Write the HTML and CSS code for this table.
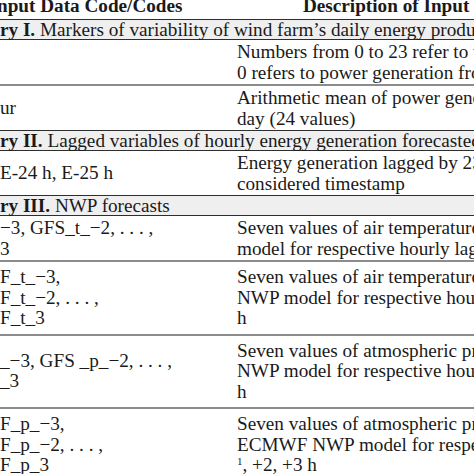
FILE: index.html
```html
<!DOCTYPE html>
<html>
<head>
<meta charset="utf-8">
<link rel="stylesheet" href="styles.css">
</head>
<body>
<div class="table">
  <div class="head">
    <div class="c1">nput Data Code/Codes</div>
    <div class="c2">Description of Input Data</div>
  </div>
  <div class="cat"><b>ry I.</b> Markers of variability of wind farm’s daily energy production</div>
  <div class="row two">
    <div class="c1"></div>
    <div class="c2">Numbers from 0 to 23 refer to the hours of the day;<br>0 refers to power generation from 0:00 to 1:00</div>
  </div>
  <div class="row two">
    <div class="c1">ur</div>
    <div class="c2">Arithmetic mean of power generation during the<br>day (24 values)</div>
  </div>
  <div class="cat"><b>ry II.</b> Lagged variables of hourly energy generation forecasted to</div>
  <div class="row two">
    <div class="c1">E-24 h, E-25 h</div>
    <div class="c2">Energy generation lagged by 23, 24 and 25 h to the<br>considered timestamp</div>
  </div>
  <div class="cat"><b>ry III.</b> NWP forecasts</div>
  <div class="row two">
    <div class="c1">−3, GFS_t_−2, . . . ,<br>3</div>
    <div class="c2">Seven values of air temperature from the GFS NWP<br>model for respective hourly lags: −3, −2, −1, 0, +1, +2, +3 h</div>
  </div>
  <div class="row three">
    <div class="c1">F_t_−3,<br>F_t_−2, . . . ,<br>F_t_3</div>
    <div class="c2">Seven values of air temperature from the ECMWF<br>NWP model for respective hourly lags: −3, −2, −1, 0, +1<br>h</div>
  </div>
  <div class="row three">
    <div class="c1">_−3, GFS _p_−2, . . . ,<br>_3</div>
    <div class="c2">Seven values of atmospheric pressure from the GFS<br>NWP model for respective hourly lags: −3, −2, −1, 0, +1<br>h</div>
  </div>
  <div class="row three">
    <div class="c1">F_p_−3,<br>F_p_−2, . . . ,<br>F_p_3</div>
    <div class="c2">Seven values of atmospheric pressure from the<br>ECMWF NWP model for respective hourly lags: −3, −2<br><sup>1</sup>, +2, +3 h</div>
  </div>
</div>
</body>
</html>
```
FILE: styles.css
```css
html, body {
  margin: 0;
  background: #ffffff;
}

body {
  width: 474px;
  height: 474px;
  overflow: hidden;
  font-family: "Liberation Serif", "Times New Roman", serif;
  font-size: 19.2px;
  line-height: 20.5px;
  color: #1a1a1a;
  white-space: nowrap;
}

.table {
  display: flex;
  flex-direction: column;
}

.head {
  display: grid;
  grid-template-columns: 237px auto;
  margin-top: -4px;
  height: 23px;
  font-weight: bold;
}

.head .c1 {
  margin-left: -3px;
}

.head .c2 {
  padding-left: 66px;
}

.cat {
  background: #efefef;
  height: 19px;
  line-height: 19px;
  border-top: 1px solid #2e2e2e;
  border-bottom: 1px solid #2e2e2e;
}

.row {
  display: grid;
  grid-template-columns: 237px auto;
  align-items: center;
  border-top: 2px solid #8c8c8c;
}

.cat + .row {
  border-top: none;
}

.row.two {
  padding: 2px 0 1px;
}

.row.three {
  padding: 5px 0 5px;
}

sup {
  font-size: 11px;
  line-height: 0;
  vertical-align: 6px;
}
```
